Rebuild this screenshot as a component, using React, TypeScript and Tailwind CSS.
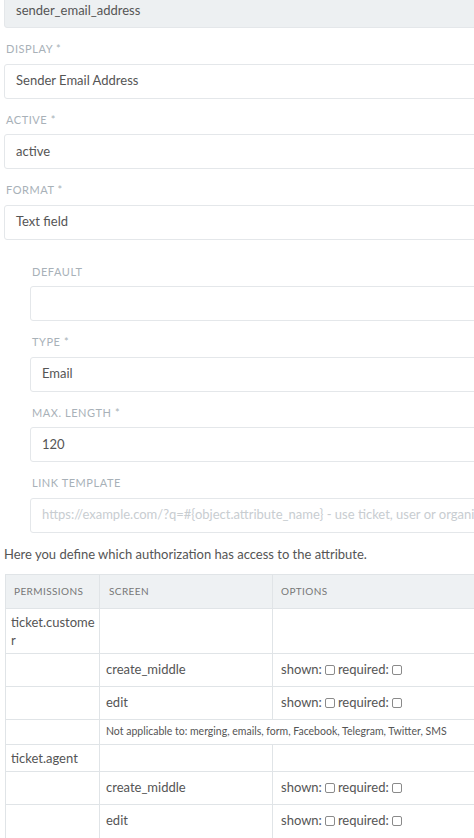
import clsx from 'clsx';

const FONT = "font-['Lato','Liberation_Sans',sans-serif]";

function Label({ text, indent }: { text: string; indent?: boolean }): JSX.Element {
  return (
    <div
      className={clsx(
        'mt-[14px] mb-[7.5px] h-[14px] text-[11px] leading-[14px] uppercase tracking-[0.05em] text-[#a8b1b8]',
        indent ? 'pl-[32px]' : 'pl-[6px]',
      )}
    >
      {text}
    </div>
  );
}

function Input({ value, placeholder, indent }: { value?: string; placeholder?: string; indent?: boolean }): JSX.Element {
  return (
    <div
      className={clsx(
        'h-[35px] flex items-center rounded-[3px] border border-[#e4e7ea] bg-white pl-[11px] text-[13px] whitespace-nowrap overflow-hidden',
        indent ? 'ml-[30px]' : 'ml-[4px]',
      )}
    >
      {value ? <span className="text-[#555]">{value}</span> : <span className="text-[#c8cdd1]">{placeholder}</span>}
    </div>
  );
}

function Check(): JSX.Element {
  return <span className="inline-block w-[10px] h-[10px] rounded-[2px] border border-[#8a8a8a] bg-white align-[-1px] mx-[3px]" />;
}

function Options(): JSX.Element {
  return (
    <span className="text-[#555]">
      shown:<Check />required:<Check />
    </span>
  );
}

const rows: { perm?: string; screen?: string; opts?: boolean; note?: string; h: string }[] = [
  { perm: 'ticket.customer', h: 'h-[45px]' },
  { screen: 'create_middle', opts: true, h: 'h-[33px]' },
  { screen: 'edit', opts: true, h: 'h-[33px]' },
  { note: 'Not applicable to: merging, emails, form, Facebook, Telegram, Twitter, SMS', h: 'h-[25px]' },
  { perm: 'ticket.agent', h: 'h-[27px]' },
  { screen: 'create_middle', opts: true, h: 'h-[33px]' },
  { screen: 'edit', opts: true, h: 'h-[34px]' },
];

const th = 'border border-[#e0e4e7] text-left font-normal text-[10px] uppercase tracking-[0.04em] text-[#777]';
const td = 'border border-[#e0e4e7] align-middle text-[#555]';

export default function App(): JSX.Element {
  return (
    <div className={clsx('w-[474px] h-[838px] overflow-hidden bg-white text-[#555]', FONT)}>
      <div className="w-[640px]">
        <div className="-mt-[7px] ml-[4px] h-[35px] flex items-center rounded-[3px] bg-[#edf0f2] border border-[#e4e7ea] pl-[11px] text-[13px] text-[#555]">
          sender_email_address
        </div>

        <Label text="Display *" />
        <Input value="Sender Email Address" />
        <Label text="Active *" />
        <Input value="active" />
        <Label text="Format *" />
        <Input value="Text field" />

        <div className="pt-[11px]">
          <Label text="Default" indent />
          <Input indent />
          <Label text="Type *" indent />
          <Input value="Email" indent />
          <Label text="Max. Length *" indent />
          <Input value="120" indent />
          <Label text="Link Template" indent />
          <Input
            indent
            placeholder="https://example.com/?q=#{object.attribute_name} - use ticket, user or organization as object"
          />
        </div>

        <p className="mt-[12px] pl-[4px] h-[18px] leading-[18px] text-[13px] text-[#555]">
          Here you define which authorization has access to the attribute.
        </p>

        <table className="mt-[11px] ml-[5px] w-[620px] border-collapse text-[13px] table-fixed">
          <colgroup>
            <col className="w-[94px]" />
            <col className="w-[173px]" />
            <col />
          </colgroup>
          <thead>
            <tr className="h-[34px] bg-[#eef1f3]">
              <th className={clsx(th, 'pl-[8px]')}>Permissions</th>
              <th className={clsx(th, 'pl-[9px]')}>Screen</th>
              <th className={clsx(th, 'pl-[8px]')}>Options</th>
            </tr>
          </thead>
          <tbody>
            {rows.map((r, i) => (
              <tr key={i} className={r.h}>
                <td className={clsx(td, 'pl-[5px] pr-[1px] break-all leading-[18px]')}>{r.perm}</td>
                {r.note ? (
                  <td colSpan={2} className={clsx(td, 'pl-[6px] text-[10.5px] whitespace-nowrap')}>
                    {r.note}
                  </td>
                ) : (
                  <>
                    <td className={clsx(td, 'pl-[6px]')}>{r.screen}</td>
                    <td className={clsx(td, 'pl-[8px]')}>{r.opts && <Options />}</td>
                  </>
                )}
              </tr>
            ))}
          </tbody>
        </table>
      </div>
    </div>
  );
}
